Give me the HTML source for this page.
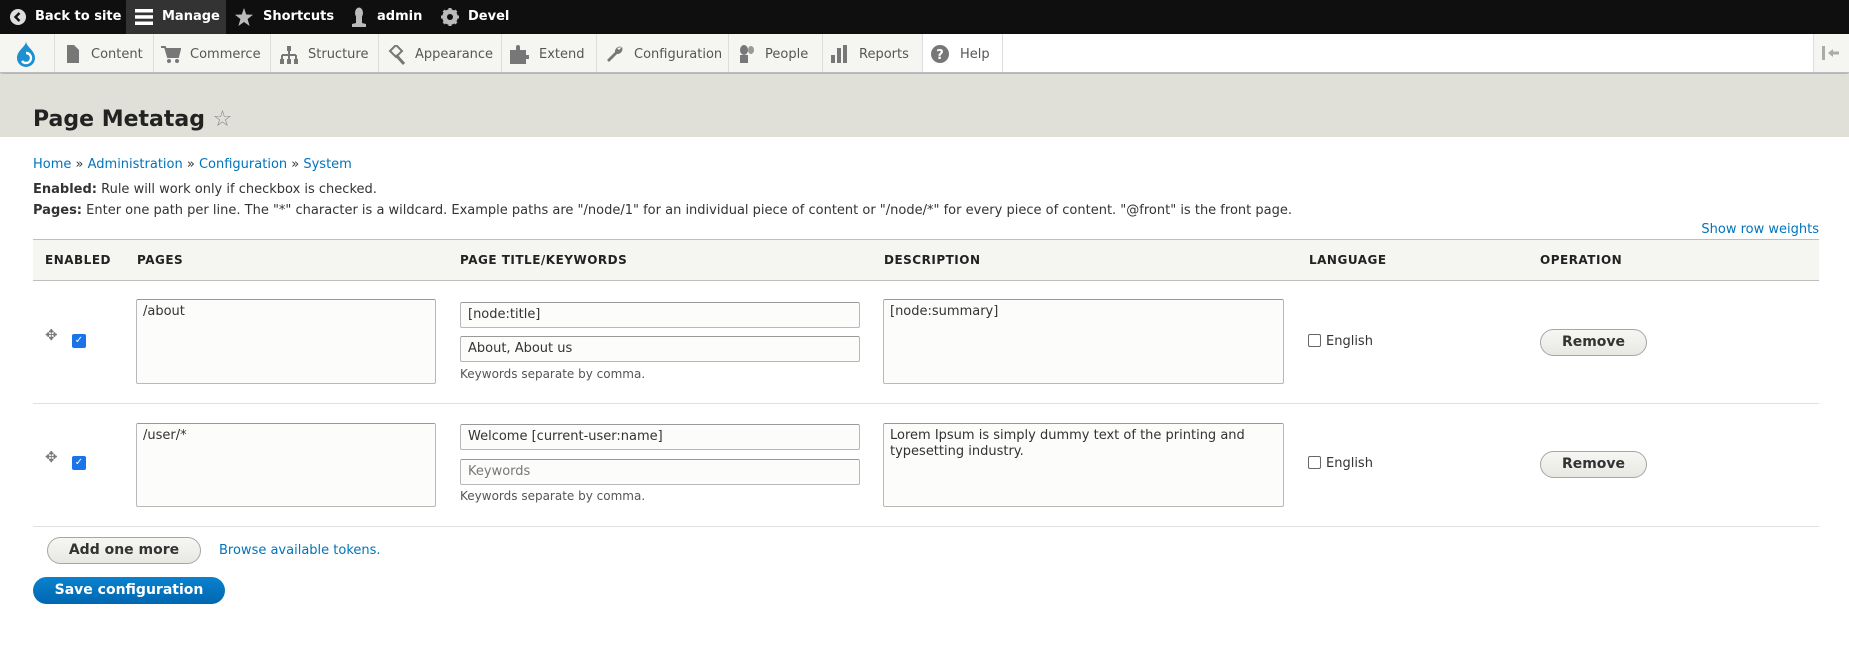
<!DOCTYPE html>
<html><head><meta charset="utf-8"><style>
*{box-sizing:border-box;margin:0;padding:0}
body{width:1849px;height:660px;overflow:hidden;background:#fff;font-family:"DejaVu Sans","Liberation Sans",sans-serif;font-size:13px;color:#333;position:relative}
.a{position:absolute;white-space:nowrap}
#tb{left:0;top:0;width:1849px;height:34px;background:#0f0f0f}
.tbi{position:absolute;top:0;height:34px;line-height:34px;color:#fff;font-weight:bold;font-size:13px}
#tray{left:0;top:34px;width:1849px;height:39px;background:#f5f5f2;border-bottom:1px solid #bbb;box-shadow:0 2px 3px rgba(0,0,0,.35)}
.ti{position:absolute;top:0;height:38px;line-height:42px;color:#565656;font-size:13px;border-left:1px solid #ddd}
#hdr{left:0;top:74px;width:1849px;height:63px;background:#e0e0d8}
h1{position:absolute;left:33px;top:106px;font-size:22px;font-weight:bold;color:#222;line-height:28px}
a{color:#0074bd;text-decoration:none}
.th{position:absolute;top:253px;font-weight:bold;font-size:12px;letter-spacing:.5px;color:#222}
.ta{position:absolute;background:#fcfcfa;border:1px solid #b8b8b8;border-top-color:#999;border-radius:2px;padding:4px 6px;font-size:13px;color:#333;line-height:16px}
.inp{position:absolute;background:#fcfcfa;border:1px solid #b8b8b8;border-top-color:#999;border-radius:2px;padding:0 7px;height:26px;line-height:24px;font-size:13px;color:#333}
.cb{position:absolute;width:14px;height:14px;background:#1a73e8;border-radius:2px;color:#fff;font-size:10px;line-height:14px;text-align:center}
.cbe{position:absolute;width:13px;height:13px;border:1px solid #666;border-radius:2px;background:#fff}
.btn{position:absolute;border:1px solid #a6a6a6;border-radius:20px;background:linear-gradient(#f6f6f3,#e8e8e3);font-weight:bold;font-size:14px;color:#333;text-align:center}
.help{position:absolute;font-size:12px;color:#555}
.hr{position:absolute;left:33px;width:1786px;height:1px;background:#e0e0dc}
</style></head><body>
<div id="tb" class="a"></div>
<div class="a" style="left:126px;top:0;width:100px;height:34px;background:#333"></div>
<svg class="a" style="left:10px;top:9px" width="16" height="16"><circle cx="8" cy="8" r="8" fill="#ddd"/><path d="M9.5 4 L5.5 8 L9.5 12" stroke="#0f0f0f" stroke-width="2.4" fill="none"/></svg>
<div class="tbi" style="left:35px">Back to site</div>
<svg class="a" style="left:135px;top:9px" width="18" height="16"><rect y="0" width="18" height="3.5" fill="#fff"/><rect y="6.2" width="18" height="3.5" fill="#fff"/><rect y="12.5" width="18" height="3.5" fill="#fff"/></svg>
<div class="tbi" style="left:162px">Manage</div>
<svg class="a" style="left:235px;top:8px" width="18" height="18"><path d="M9 0 L11.2 6.5 L18 6.8 L12.6 11 L14.6 18 L9 14 L3.4 18 L5.4 11 L0 6.8 L6.8 6.5Z" fill="#bbb"/></svg>
<div class="tbi" style="left:263px">Shortcuts</div>
<svg class="a" style="left:351px;top:7px" width="16" height="20"><ellipse cx="8" cy="6" rx="4" ry="5.5" fill="#bbb"/><path d="M5 10 L11 10 L11 16 L15 17 L15 20 L1 20 L1 17 L5 16Z" fill="#bbb"/></svg>
<div class="tbi" style="left:377px">admin</div>
<svg class="a" style="left:441px;top:8px" width="18" height="18"><circle cx="9" cy="9" r="6" fill="none" stroke="#bbb" stroke-width="3.5"/><g stroke="#bbb" stroke-width="3"><path d="M9 0V18M0 9H18M2.6 2.6L15.4 15.4M15.4 2.6L2.6 15.4"/></g><circle cx="9" cy="9" r="3" fill="#0f0f0f"/></svg>
<div class="tbi" style="left:468px">Devel</div>

<div id="tray" class="a"></div>
<svg class="a" style="left:14px;top:40px" width="24" height="28"><path d="M12 1 C12 7 3 10 3 18 A9 9 0 0 0 21 18 C21 10 12 7 12 1Z" fill="#1e8fd1"/><path d="M12 13 A5 5 0 1 1 8 21" stroke="#fff" stroke-width="2.4" fill="none"/></svg>
<div class="ti" style="left:54px;top:34px;width:99px;padding-left:36px">Content</div>
<div class="ti" style="left:153px;top:34px;width:117px;padding-left:36px">Commerce</div>
<div class="ti" style="left:270px;top:34px;width:108px;padding-left:37px">Structure</div>
<div class="ti" style="left:378px;top:34px;width:123px;padding-left:36px">Appearance</div>
<div class="ti" style="left:501px;top:34px;width:95px;padding-left:37px">Extend</div>
<div class="ti" style="left:596px;top:34px;width:132px;padding-left:37px">Configuration</div>
<div class="ti" style="left:728px;top:34px;width:94px;padding-left:36px">People</div>
<div class="ti" style="left:822px;top:34px;width:100px;padding-left:36px">Reports</div>
<div class="ti" style="left:922px;top:34px;width:81px;padding-left:37px;background:#fff;border-right:1px solid #ddd">Help</div>
<div class="a" style="left:1003px;top:34px;width:810px;height:38px;background:#fff"></div>
<div class="a" style="left:1813px;top:34px;width:36px;height:38px;border-left:1px solid #ddd;background:#f5f5f2"></div>
<svg class="a" style="left:1822px;top:46px" width="18" height="14"><rect x="0" y="0" width="3" height="14" fill="#aaa"/><path d="M6 7 L11 3 V5.5 H17 V8.5 H11 V11Z" fill="#aaa"/></svg>
<svg class="a" style="left:67px;top:45px" width="12" height="18"><path d="M0 0H7L12 5V18H0Z" fill="#777"/></svg>
<svg class="a" style="left:161px;top:44px" width="20" height="20"><path d="M0 3H4L7 13H17L19 5H5" stroke="#777" stroke-width="2" fill="none"/><rect x="6" y="5" width="12" height="7" fill="#777"/><circle cx="8" cy="17" r="2" fill="#777"/><circle cx="16" cy="17" r="2" fill="#777"/></svg>
<svg class="a" style="left:279px;top:46px" width="20" height="18"><rect x="8" y="0" width="4" height="5" fill="#777"/><path d="M10 5V9M3 9H17M3 9V13M10 9V13M17 9V13" stroke="#777" stroke-width="2" fill="none"/><rect x="1" y="13" width="4" height="5" fill="#777"/><rect x="8" y="13" width="4" height="5" fill="#777"/><rect x="15" y="13" width="4" height="5" fill="#777"/></svg>
<svg class="a" style="left:387px;top:45px" width="20" height="20"><path d="M3 6L9 0L15 6L9 12Z" fill="none" stroke="#777" stroke-width="2"/><path d="M9 10L17 19" stroke="#777" stroke-width="3"/></svg>
<svg class="a" style="left:510px;top:45px" width="20" height="20"><path d="M0 5H6V2A2 2 0 0 1 10 2V5H16V10H19V14H16V19H0Z" fill="#777"/></svg>
<svg class="a" style="left:605px;top:44px" width="20" height="20"><path d="M17 3A5 5 0 0 0 10 8L2 16L4 18L12 10A5 5 0 0 0 17 3L14 6L12 4Z" fill="#777"/></svg>
<svg class="a" style="left:737px;top:44px" width="20" height="20"><ellipse cx="7" cy="6" rx="4" ry="5" fill="#777"/><path d="M3 11H11V19H3Z" fill="#777"/><ellipse cx="14" cy="6" rx="3" ry="4" fill="#999"/></svg>
<svg class="a" style="left:831px;top:45px" width="20" height="18"><rect x="0" y="10" width="4" height="8" fill="#777"/><rect x="6" y="3" width="4" height="15" fill="#777"/><rect x="12" y="0" width="4" height="18" fill="#777"/></svg>
<svg class="a" style="left:931px;top:45px" width="18" height="18"><circle cx="9" cy="9" r="9" fill="#777"/><text x="9" y="14" font-size="13" font-weight="bold" fill="#fff" text-anchor="middle" font-family="DejaVu Sans">?</text></svg>

<div id="hdr" class="a"></div>
<h1>Page Metatag <span style="font-weight:normal;color:#888;font-size:22px">☆</span></h1>

<div class="a" style="left:33px;top:157px"><a>Home</a> » <a>Administration</a> » <a>Configuration</a> » <a>System</a></div>
<div class="a" style="left:33px;top:182px"><b>Enabled:</b> Rule will work only if checkbox is checked.</div>
<div class="a" style="left:33px;top:203px"><b>Pages:</b> Enter one path per line. The "*" character is a wildcard. Example paths are "/node/1" for an individual piece of content or "/node/*" for every piece of content. "@front" is the front page.</div>
<div class="a" style="left:1619px;top:222px;width:200px;text-align:right"><a>Show row weights</a></div>

<div class="a" style="left:33px;top:239px;width:1786px;height:42px;background:#f5f5f2;border-top:1px solid #bfbfba;border-bottom:1px solid #bfbfba"></div>
<div class="th" style="left:45px">ENABLED</div>
<div class="th" style="left:137px">PAGES</div>
<div class="th" style="left:460px">PAGE TITLE/KEYWORDS</div>
<div class="th" style="left:884px">DESCRIPTION</div>
<div class="th" style="left:1309px">LANGUAGE</div>
<div class="th" style="left:1540px">OPERATION</div>

<div class="a" style="left:45px;top:326px;color:#777;font-size:15px">✥</div>
<div class="cb" style="left:72px;top:334px">✓</div>
<div class="ta" style="left:136px;top:299px;width:300px;height:85px">/about</div>
<div class="inp" style="left:460px;top:302px;width:400px">[node:title]</div>
<div class="inp" style="left:460px;top:336px;width:400px">About, About us</div>
<div class="help" style="left:460px;top:367px">Keywords separate by comma.</div>
<div class="ta" style="left:883px;top:299px;width:401px;height:85px">[node:summary]</div>
<div class="cbe" style="left:1308px;top:334px"></div>
<div class="a" style="left:1326px;top:334px">English</div>
<div class="btn" style="left:1540px;top:329px;width:107px;height:27px;line-height:25px">Remove</div>
<div class="hr" style="top:403px"></div>

<div class="a" style="left:45px;top:448px;color:#777;font-size:15px">✥</div>
<div class="cb" style="left:72px;top:456px">✓</div>
<div class="ta" style="left:136px;top:423px;width:300px;height:84px">/user/*</div>
<div class="inp" style="left:460px;top:424px;width:400px">Welcome [current-user:name]</div>
<div class="inp" style="left:460px;top:459px;width:400px;color:#777">Keywords</div>
<div class="help" style="left:460px;top:489px">Keywords separate by comma.</div>
<div class="ta" style="left:883px;top:423px;width:401px;height:84px;white-space:normal">Lorem Ipsum is simply dummy text of the printing and typesetting industry.</div>
<div class="cbe" style="left:1308px;top:456px"></div>
<div class="a" style="left:1326px;top:456px">English</div>
<div class="btn" style="left:1540px;top:451px;width:107px;height:27px;line-height:25px">Remove</div>
<div class="hr" style="top:526px"></div>

<div class="btn" style="left:47px;top:537px;width:154px;height:27px;line-height:25px">Add one more</div>
<div class="a" style="left:219px;top:543px"><a>Browse available tokens.</a></div>
<div class="a" style="left:33px;top:577px;width:192px;height:27px;line-height:27px;border-radius:20px;background:linear-gradient(#0a82cf,#0067b0);color:#fff;font-weight:bold;font-size:14px;text-align:center">Save configuration</div>
</body></html>
